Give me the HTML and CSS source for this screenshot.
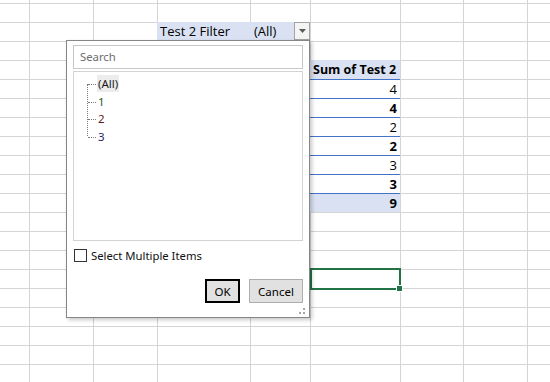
FILE: index.html
```
<!DOCTYPE html>
<html lang="en">
<head>
<meta charset="UTF-8">
<meta name="viewport" content="width=device-width, initial-scale=1.0">
<title>Pivot Filter</title>
<link rel="stylesheet" href="styles.css">
</head>
<body>
<div class="sheet">
  <div class="cell fill label">Test 2 Filter</div>
  <div class="cell fill value">
    <span>(All)</span>
    <span class="drop"><svg width="7" height="4" viewBox="0 0 7 4"><path d="M0 0h7L3.5 4z" fill="#5a5a5a"/></svg></span>
  </div>

  <div class="cell head sum-col">Sum of Test 2</div>
  <div class="cell num r6">4</div>
  <div class="cell num bold r7">4</div>
  <div class="cell num r8">2</div>
  <div class="cell num bold r9">2</div>
  <div class="cell num r10">3</div>
  <div class="cell num bold r11">3</div>
  <div class="cell num bold total">9</div>

  <div class="selected"><span class="handle"></span></div>

  <div class="filter-pop">
    <div class="search">Search</div>
    <div class="tree">
      <ul>
        <li class="all"><span>(All)</span></li>
        <li class="v1"><span>1</span></li>
        <li class="v2"><span>2</span></li>
        <li class="v3"><span>3</span></li>
      </ul>
    </div>
    <label class="multi"><span class="box"></span>Select Multiple Items</label>
    <div class="actions">
      <button class="btn ok">OK</button>
      <button class="btn">Cancel</button>
    </div>
    <svg class="grip" width="6" height="6" viewBox="0 0 6 6">
      <rect x="4" y="0" width="2" height="2" fill="#a6a6a6"/>
      <rect x="0" y="4" width="2" height="2" fill="#a6a6a6"/>
      <rect x="4" y="4" width="2" height="2" fill="#a6a6a6"/>
    </svg>
  </div>
</div>
</body>
</html>
```

FILE: styles.css
```
body {
    margin: 0;
    background: #fff;
    overflow: hidden;
}

.sheet {
    position: relative;
    width: 550px;
    height: 382px;
    display: grid;
    grid-template-columns: 29px 64px 64px 93px 60px 90px 63px 64px 1fr;
    grid-template-rows: 3px repeat(20, 19px);
    font-family: "Open Sans", sans-serif;
    font-size: 13px;
    color: #000;
    background:
        linear-gradient(#d4d4d4, #d4d4d4) 29px 0 / 1px 100% no-repeat,
        linear-gradient(#d4d4d4, #d4d4d4) 93px 0 / 1px 100% no-repeat,
        linear-gradient(#d4d4d4, #d4d4d4) 157px 0 / 1px 100% no-repeat,
        linear-gradient(#d4d4d4, #d4d4d4) 250px 0 / 1px 100% no-repeat,
        linear-gradient(#d4d4d4, #d4d4d4) 310px 0 / 1px 100% no-repeat,
        linear-gradient(#d4d4d4, #d4d4d4) 400px 0 / 1px 100% no-repeat,
        linear-gradient(#d4d4d4, #d4d4d4) 463px 0 / 1px 100% no-repeat,
        linear-gradient(#d4d4d4, #d4d4d4) 527px 0 / 1px 100% no-repeat,
        repeating-linear-gradient(180deg, #d4d4d4 0 1px, transparent 1px 19px) 0 3px / 100% 100% no-repeat;
}

.cell {
    line-height: 19px;
    white-space: nowrap;
}

.fill {
    background: #d9e1f2;
    grid-row: 3;
}

.label {
    grid-column: 4;
    padding-left: 3px;
}

.value {
    grid-column: 5;
    display: flex;
    justify-content: space-between;
    padding-left: 4px;
}

.drop {
    width: 16px;
    height: 18px;
    box-sizing: border-box;
    border: 1px solid #a3a3a3;
    background: #f4f4f4;
    display: flex;
    align-items: center;
    justify-content: center;
}

.head {
    grid-row: 5;
    background: #d9e1f2;
    font-weight: bold;
    font-size: 12.5px;
    padding-left: 3px;
}

.sum-col { grid-column: 6; }

.num {
    grid-column: 6;
    text-align: right;
    padding-right: 3px;
    background: #fff;
    border-top: 1px solid #4472c4;
    line-height: 18px;
}

.bold { font-weight: bold; }

.r6 { grid-row: 6; }
.r7 { grid-row: 7; }
.r8 { grid-row: 8; }
.r9 { grid-row: 9; }
.r10 { grid-row: 10; }
.r11 { grid-row: 11; }

.total {
    grid-row: 12;
    background: #d9e1f2;
}

.selected {
    grid-column: 6;
    grid-row: 16;
    margin: -1px -1px -2px 0;
    border: 2px solid #217346;
    position: relative;
}

.handle {
    position: absolute;
    right: -4px;
    bottom: -4px;
    width: 5px;
    height: 5px;
    background: #217346;
    border: 1px solid #fff;
}

/* filter dropdown */
.filter-pop {
    position: absolute;
    left: 66px;
    top: 40px;
    width: 244px;
    height: 278px;
    box-sizing: border-box;
    border: 1px solid #868686;
    background: #fff;
    box-shadow: 2px 2px 4px rgba(0, 0, 0, 0.22);
    padding: 4px 6px 0 6px;
    font-family: "Noto Sans", sans-serif;
    font-size: 11.3px;
    color: #111;
    display: flex;
    flex-direction: column;
}

.search {
    height: 24px;
    box-sizing: border-box;
    border: 1px solid #c6c6c6;
    color: #6d6d6d;
    padding-left: 6px;
    line-height: 22px;
}

.tree {
    margin-top: 2px;
    height: 170px;
    box-sizing: border-box;
    border: 1px solid #d3d3d3;
    padding-top: 3px;
}

.tree ul {
    list-style: none;
    margin: 0;
    padding: 0;
    position: relative;
}

.tree ul::before {
    content: "";
    position: absolute;
    left: 13px;
    top: 9px;
    bottom: 9px;
    border-left: 1px dotted #7a7a7a;
}

.tree li {
    position: relative;
    height: 17.5px;
    line-height: 17.5px;
    padding-left: 23px;
    font-size: 11.5px;
}

.tree li::before {
    content: "";
    position: absolute;
    left: 14px;
    width: 8px;
    top: 9px;
    border-top: 1px dotted #7a7a7a;
}

.tree li span {
    padding: 1px 1px;
}

.tree li.all span { background: #ececec; color: #1b1b1b; }
.tree li.v1 span { color: #245a2c; }
.tree li.v2 span { color: #5e2020; }
.tree li.v3 span { color: #26266a; }

.multi {
    display: flex;
    align-items: center;
    margin-top: 8px;
    height: 13px;
    padding-left: 1px;
}

.box {
    width: 13px;
    height: 13px;
    box-sizing: border-box;
    border: 1px solid #333;
    margin-right: 4px;
}

.actions {
    display: flex;
    justify-content: flex-end;
    gap: 9px;
    margin-top: 17px;
}

.btn {
    height: 24px;
    box-sizing: border-box;
    background: #e1e1e1;
    border: 1px solid #adadad;
    font-family: "Noto Sans", sans-serif;
    font-size: 11.5px;
    color: #000;
    padding: 0;
    width: 54px;
}

.btn.ok {
    width: 35px;
    border: 2px solid #000;
}

.grip {
    position: absolute;
    right: 4px;
    bottom: 3px;
}
```
